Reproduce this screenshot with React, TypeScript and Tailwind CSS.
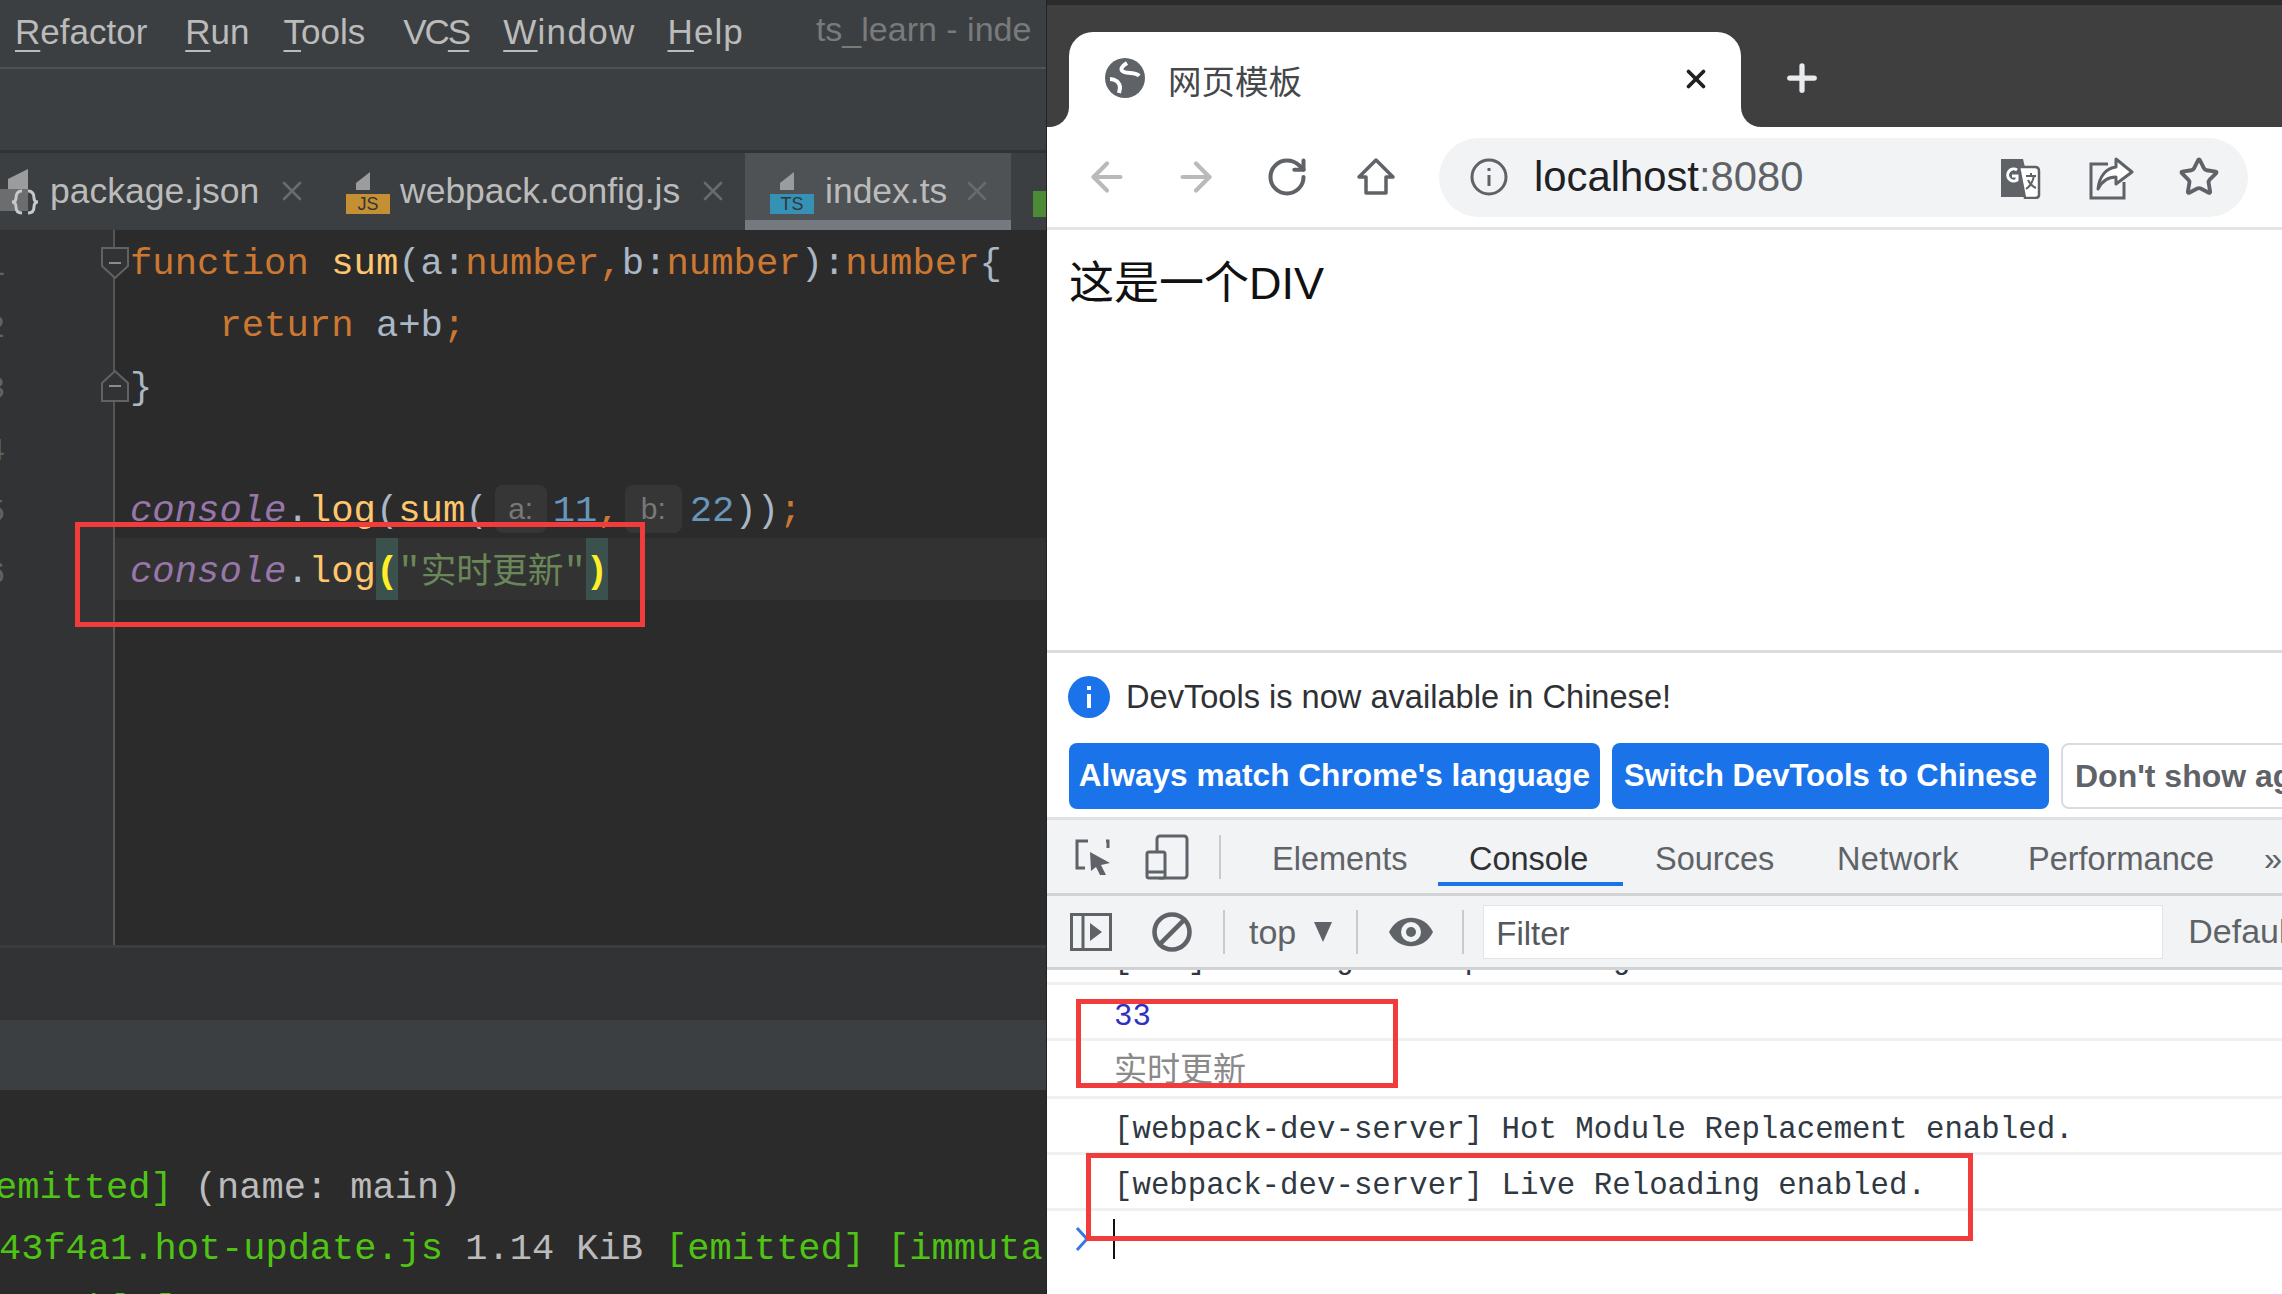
import React from "react";
import { X, Plus, ArrowLeft, ArrowRight, RotateCw, Star, Ban } from "lucide-react";

const mono = "font-['Liberation_Mono','Noto_Sans_CJK_SC',monospace]";

function Menu({ k, r, w }: { k: string; r: string; w: string }) {
  return (
    <span className={`${w} shrink-0`}>
      <span className="underline underline-offset-[6px] decoration-2">{k}</span>
      {r}
    </span>
  );
}

function FileIcon({ label, color, cls }: { label: string; color: string; cls: string }) {
  return (
    <span className={`relative shrink-0 w-[44px] h-[44px] ${cls}`}>
      <svg width="44" height="44" viewBox="0 0 44 44" className="absolute left-0 top-0">
        <path d="M10 20 L10 13 L24 2 L24 20 Z" fill="#9a9c9e" />
      </svg>
      <span
        className={`absolute left-0 bottom-0 w-[44px] h-[20px] ${color} text-[18px] leading-[20px] text-center text-[#33363a] font-['Liberation_Sans',sans-serif]`}
      >
        {label}
      </span>
    </span>
  );
}

function Tab({ icon, text, w, xLeft, active }: { icon: React.ReactNode; text: string; w: string; xLeft: string; active?: boolean }) {
  return (
    <div className={`relative flex items-center h-[77px] shrink-0 ${w} ${active ? "bg-[#4e5254]" : ""}`}>
      {icon}
      <span className="text-[#bbbbbb] text-[35.5px] leading-none">{text}</span>
      <X className="text-[#686a6c] shrink-0 mt-[-2px]" size={32} strokeWidth={2} style={{ marginLeft: xLeft }} />
      {active && <div className="absolute left-0 right-0 bottom-0 h-[10px] bg-[#747a80]" />}
    </div>
  );
}

function Fold({ up }: { up?: boolean }) {
  return (
    <svg width="30" height="36" viewBox="0 0 30 36" className="absolute right-[-17px] top-[12px] z-10 bg-transparent">
      {up ? (
        <path d="M2 33 V15 L15 3 L28 15 V33 Z" fill="#313335" stroke="#606366" strokeWidth="2" />
      ) : (
        <path d="M2 3 V21 L15 33 L28 21 V3 Z" fill="#313335" stroke="#606366" strokeWidth="2" />
      )}
      <path d="M9 18 H21" stroke="#8a8c8e" strokeWidth="2" />
    </svg>
  );
}

function GutterRow({ n, fold }: { n?: string; fold?: "down" | "up" }) {
  return (
    <div className="relative h-[61.6px] overflow-visible">
      {n && <span className={`absolute left-[-14px] top-[10px] text-[32px] text-[#606366] ${mono}`}>{n}</span>}
      {fold && <Fold up={fold === "up"} />}
    </div>
  );
}

function CodeLine({ children, active }: { children?: React.ReactNode; active?: boolean }) {
  return (
    <div className={`flex items-center h-[61.6px] pl-[15px] pt-[9px] whitespace-pre text-[37.25px] ${mono} ${active ? "bg-[#323232]" : ""}`}>
      {children}
    </div>
  );
}

function Hint({ t, cls }: { t: string; cls: string }) {
  return (
    <span className={`flex items-center justify-center h-[48px] mt-[-6px] rounded-[8px] bg-[#363636] text-[#787878] text-[30px] font-['Liberation_Sans',sans-serif] ${cls}`}>
      {t}
    </span>
  );
}

function ConsoleRow({ children, cls }: { children: React.ReactNode; cls: string }) {
  return <div className={`border-b-[3px] border-[#f0f0f0] pl-[67px] flex items-center whitespace-pre text-[30.75px] ${cls}`}>{children}</div>;
}

function RedBox({ cls }: { cls: string }) {
  return <div className={`absolute border-[5px] border-[#f23c3c] ${cls}`} />;
}

export default function App() {
  const cP = "text-[#9876aa] italic";
  const cO = "text-[#cc7832]";
  const cY = "text-[#ffc66d]";
  const cW = "text-[#a9b7c6]";
  const cB = "text-[#6897bb]";
  const cS = "text-[#6a8759]";
  const brace = "bg-[#3b514d] text-[#ffef28] font-bold self-stretch -mt-[9px] pt-[9px] flex items-center";
  return (
    <div className="relative flex w-[2282px] h-[1294px] overflow-hidden bg-[#2b2b2b] font-['Liberation_Sans','Noto_Sans_CJK_SC',sans-serif]">
      {/* IDE */}
      <div className="flex flex-col w-[1046px] shrink-0 overflow-hidden">
        <div className="flex items-center h-[69px] pl-[15px] pb-[2px] bg-[#3c3f41] border-b-2 border-[#505355] text-[#bbbbbb] text-[35px] overflow-hidden whitespace-nowrap">
          <Menu k="R" r="efactor" w="" />
          <Menu k="R" r="un" w="ml-[38px]" />
          <Menu k="T" r="ools" w="ml-[34px]" />
          <span className="shrink-0 ml-[38px] tracking-[-2px]">VC<span className="underline underline-offset-[6px] decoration-2">S</span></span>
          <span className="shrink-0 ml-[34px] tracking-[1.3px]"><span className="underline underline-offset-[6px] decoration-2">W</span>indow</span>
          <span className="shrink-0 ml-[32px] tracking-[1.1px]"><span className="underline underline-offset-[6px] decoration-2">H</span>elp</span>
          <span className="ml-[72px] text-[#787a7c] mb-[6px] text-[34px]">ts_learn - inde</span>
        </div>
        <div className="h-[84px] bg-[#3c3f41] border-b-[3px] border-[#323232]" />
        <div className="flex h-[77px] bg-[#3c3f41] overflow-hidden whitespace-nowrap">
          <Tab w="w-[330px]" xLeft="17px" icon={
            <span className="relative shrink-0 w-[50px] h-[50px]">
              <svg width="50" height="50" viewBox="0 0 50 50">
                <path d="M8 22 L8 12 L28 2 L28 22 Z" fill="#9a9c9e" />
                <path d="M0 22 H28 V44 H0 Z" fill="#9a9c9e" opacity="0.5" />
                <path d="M22 24 Q16 24 16 31 Q16 35 12 35 Q16 35 16 40 Q16 46 22 46 M28 24 Q34 24 34 31 Q34 35 38 35 Q34 35 34 40 Q34 46 28 46" stroke="#c8c8c8" strokeWidth="3" fill="none" />
              </svg>
            </span>
          } text="package.json" />
          <Tab w="w-[415px]" xLeft="17px" icon={<FileIcon label="JS" color="bg-[#c59033]" cls="ml-[16px] mr-[10px]" />} text="webpack.config.js" />
          <Tab active w="w-[266px]" xLeft="14px" icon={<FileIcon label="TS" color="bg-[#3592b5]" cls="ml-[25px] mr-[11px]" />} text="index.ts" />
          <div className="ml-[22px] mt-[20px] w-[20px] h-[44px] flex flex-col justify-end">
            <div className="h-[26px] bg-[#4c8a35]" />
          </div>
        </div>

        <div className="flex h-[715px] bg-[#2b2b2b]">
          <div className="relative w-[115px] shrink-0 bg-[#313335] border-r-2 border-[#555555] pt-[3px]">
            <GutterRow n="1" fold="down" />
            <GutterRow n="2" />
            <GutterRow n="3" fold="up" />
            <GutterRow n="4" />
            <GutterRow n="5" />
            <GutterRow n="6" />
          </div>
          <div className="flex-1 min-w-0">
            <CodeLine>
              <span className={cO}>function </span>
              <span className={cY}>sum</span>
              <span className={cW}>(a:</span>
              <span className={cO}>number,</span>
              <span className={cW}>b:</span>
              <span className={cO}>number</span>
              <span className={cW}>):</span>
              <span className={cO}>number</span>
              <span className={cW}>{"{"}</span>
            </CodeLine>
            <CodeLine>
              <span className={cO}>    return </span>
              <span className={cW}>a+b</span>
              <span className={cO}>;</span>
            </CodeLine>
            <CodeLine><span className={cW}>{"}"}</span></CodeLine>
            <CodeLine />
            <CodeLine>
              <span className={cP}>console</span>
              <span className={cW}>.</span>
              <span className={cY}>log</span>
              <span className={cW}>(</span>
              <span className={cY}>sum</span>
              <span className={cW}>(</span>
              <Hint t="a:" cls="w-[52px] ml-[7px] mr-[6px]" />
              <span className={cB}>11</span>
              <span className={cO}>,</span>
              <Hint t="b:" cls="w-[57px] ml-[5px] mr-[8px]" />
              <span className={cB}>22</span>
              <span className={cW}>))</span>
              <span className={cO}>;</span>
            </CodeLine>
            <CodeLine active>
              <span className={cP}>console</span>
              <span className={cW}>.</span>
              <span className={cY}>log</span>
              <span className={brace}>(</span>
              <span className={cS}>"</span>
              <span className={`${cS} text-[35.7px]`}>实时更新</span>
              <span className={cS}>"</span>
              <span className={brace}>)</span>
            </CodeLine>
          </div>
        </div>

        <div className="h-[72px] bg-[#313335] border-t-[3px] border-[#3a3c3e]" />
        <div className="h-[73px] bg-[#3c3f41] border-t-[3px] border-[#323232]" />
        <div className={`flex-1 bg-[#2b2b2b] pt-[68px] text-[37px] leading-[61px] whitespace-pre ${mono} overflow-hidden`}>
          <div className="-ml-[5px] text-[#4fc414]">
            emitted]<span className="text-[#bbbbbb]"> (name: main)</span>
          </div>
          <div className="-ml-[1px] text-[#4fc414]">
            43f4a1.hot-update.js<span className="text-[#bbbbbb]"> 1.14 KiB </span>[emitted] [immuta
          </div>
          <div className="text-[#4fc414]">    ble]</div>
        </div>
      </div>

      {/* Browser */}
      <div className="flex flex-col flex-1 min-w-0 border-l border-[#222]">
        <div className="relative h-[127px] bg-[#3f3f3f] border-t-[5px] border-[#2c2c2c] flex items-end pl-[22px]">
          <div className="relative flex items-center w-[672px] h-[95px] bg-white rounded-t-[24px] pl-[36px] pb-[8px]">
            <svg width="40" height="42" viewBox="0 0 40 42" className="shrink-0 mt-[4px]">
              <circle cx="20" cy="21" r="20" fill="#5f6368" />
              <path d="M22 6 C17 9 14 13 19 15 C24 17 31 15 34 19 M5 22 C10 22 15 25 15 31 L14 36" stroke="#fff" strokeWidth="4" fill="none" />
            </svg>
            <span className="ml-[23px] mt-[15px] text-[33.5px] text-[#45474a]">网页模板</span>
            <X className="absolute left-[612px] top-[32px] text-[#202124]" size={30} strokeWidth={3} />
            <div className="absolute left-[-20px] bottom-0 w-[20px] h-[20px] bg-white">
              <div className="w-full h-full bg-[#3f3f3f] rounded-br-[20px]" />
            </div>
            <div className="absolute right-[-20px] bottom-0 w-[20px] h-[20px] bg-white">
              <div className="w-full h-full bg-[#3f3f3f] rounded-bl-[20px]" />
            </div>
          </div>
          <Plus className="ml-[40px] mb-[28px] text-[#e8eaed]" size={42} strokeWidth={3} />
        </div>

        <div className="flex items-center h-[103px] bg-white border-b-[3px] border-[#e3e4e6] pl-[37px]">
          <ArrowLeft className="text-[#b8babc] shrink-0" size={46} strokeWidth={2.2} />
          <ArrowRight className="text-[#b8babc] ml-[43px] shrink-0" size={46} strokeWidth={2.2} />
          <RotateCw className="text-[#5f6368] ml-[46px] shrink-0" size={44} strokeWidth={2.2} />
          <svg width="40" height="40" viewBox="0 0 40 40" className="ml-[47px] shrink-0">
            <path d="M20 3 L37 20 H30 V36 H10 V20 H3 Z" fill="none" stroke="#5f6368" strokeWidth="3.5" strokeLinejoin="round" />
          </svg>
          <div className="flex items-center relative ml-[43px] w-[809px] h-[79px] rounded-full bg-[#f1f3f4] pl-[31px] shrink-0">
            <svg width="38" height="38" viewBox="0 0 38 38" className="shrink-0">
              <circle cx="19" cy="19" r="17" fill="none" stroke="#5f6368" strokeWidth="3" />
              <path d="M19 17 V28 M19 10 V13" stroke="#5f6368" strokeWidth="3" />
            </svg>
            <span className="ml-[26px] text-[41.8px] leading-none text-[#202124]">
              localhost<span className="text-[#5f6368]">:8080</span>
            </span>
            <svg width="42" height="42" viewBox="0 0 42 42" className="absolute left-[560px] top-[19px]">
              <path d="M2 2 H24 L33 40 H2 Z" fill="#5f6368" />
              <path d="M20 10 H36 Q40 10 40 14 V38 Q40 41 36 41 H26 Z" fill="#fff" stroke="#5f6368" strokeWidth="2.5" />
              <path d="M18 13 A6 6 0 1 0 18 23 V19 H13" stroke="#fff" strokeWidth="3" fill="none" />
              <path d="M27 19 H37 M32 16 V19 M35 19 Q33 28 27 32 M29 23 Q32 29 37 31" stroke="#5f6368" strokeWidth="2" fill="none" />
            </svg>
            <svg width="46" height="44" viewBox="0 0 46 44" className="absolute left-[649px] top-[18px]">
              <path d="M20 8 H3 V42 H36 V26" fill="none" stroke="#5f6368" strokeWidth="3" />
              <path d="M28 3 L44 16 L28 28 V21 C20 21 14 25 10 33 C11 21 18 12 28 11 Z" fill="#fff" stroke="#5f6368" strokeWidth="3" strokeLinejoin="round" />
            </svg>
            <Star className="absolute left-[739px] top-[18px] text-[#5f6368]" size={42} strokeWidth={2.2} />
          </div>
        </div>

        <div className="h-[423px] bg-white border-b-[3px] border-[#dcdcdc] pl-[22px] pt-[29px] text-[45px] leading-[50px] text-[#111]">
          这是一个DIV
        </div>

        <div className="flex items-center h-[75px] bg-white pl-[21px] pt-[13px]">
          <svg width="42" height="42" viewBox="0 0 42 42" className="shrink-0">
            <circle cx="21" cy="21" r="21" fill="#1a73e8" />
            <path d="M21 18 V32 M21 10 V14" stroke="#fff" strokeWidth="4" />
          </svg>
          <span className="ml-[16px] text-[32.6px] text-[#303134] whitespace-nowrap">DevTools is now available in Chinese!</span>
        </div>
        <div className="flex h-[92px] bg-white pl-[22px] pt-[15px] gap-[12px] border-b-[3px] border-[#dfe1e3] overflow-hidden whitespace-nowrap">
          <div className="flex items-center justify-center w-[531px] h-[66px] rounded-[8px] bg-[#1a73e8] text-white font-bold text-[31.6px] shrink-0">
            Always match Chrome's language
          </div>
          <div className="flex items-center justify-center w-[437px] h-[66px] rounded-[8px] bg-[#1a73e8] text-white font-bold text-[31px] shrink-0">
            Switch DevTools to Chinese
          </div>
          <div className="flex items-center w-[300px] h-[66px] rounded-[8px] border-2 border-[#dadce0] bg-white text-[#5f6368] font-bold text-[32px] pl-[12px] shrink-0">
            Don't show again
          </div>
        </div>

        <div className="flex items-center h-[76px] bg-[#f1f3f4] border-b-[3px] border-[#d0d2d4] pl-[27px] text-[#5f6368] text-[32.5px] whitespace-nowrap overflow-hidden">
          <svg width="38" height="38" viewBox="0 0 38 38" className="shrink-0">
            <path d="M14 3 H3 V30 H11" fill="none" stroke="#5f6368" strokeWidth="3" />
            <path d="M32 3 H34 V10" fill="none" stroke="#5f6368" strokeWidth="3" />
            <path d="M16 14 L36 25 L27 27 L32 37 L26 37 L22 29 L17 33 Z" fill="#5f6368" />
          </svg>
          <svg width="44" height="46" viewBox="0 0 44 46" className="ml-[33px] shrink-0">
            <rect x="12" y="2" width="30" height="42" rx="3" fill="none" stroke="#5f6368" strokeWidth="3" />
            <rect x="2" y="18" width="18" height="26" rx="2" fill="#f1f3f4" stroke="#5f6368" strokeWidth="3" />
            <path d="M2 38 H20" stroke="#5f6368" strokeWidth="3" />
          </svg>
          <div className="w-[2px] h-[44px] bg-[#c8cacc] ml-[30px] shrink-0" />
          <span className="ml-[51px] w-[132px] pt-[5px]">Elements</span>
          <span className="relative ml-[65px] w-[119px] pt-[5px] text-[#303134]">
            Console
            <span className="absolute left-[-31px] right-[-35px] top-[52px] h-[4px] bg-[#1a73e8]" />
          </span>
          <span className="ml-[67px] w-[115px] pt-[5px]">Sources</span>
          <span className="ml-[67px] w-[127px] pt-[5px] tracking-[0.4px]">Network</span>
          <span className="ml-[69px] w-[184px] pt-[5px]">Performance</span>
          <span className="ml-[52px] pt-[5px]">»</span>
        </div>

        <div className="flex items-center h-[74px] bg-[#f1f3f4] border-b-[3px] border-[#d0d2d4] pl-[23px] text-[#5f6368] text-[34px] whitespace-nowrap overflow-hidden">
          <svg width="42" height="38" viewBox="0 0 42 38" className="shrink-0">
            <rect x="1.5" y="1.5" width="39" height="35" fill="none" stroke="#5f6368" strokeWidth="3" />
            <path d="M13 2 V36" stroke="#5f6368" strokeWidth="3" />
            <path d="M20 10 L32 19 L20 28 Z" fill="#5f6368" />
          </svg>
          <Ban className="ml-[39px] shrink-0 -scale-x-100" size={42} strokeWidth={2.6} />
          <div className="w-[2px] h-[44px] bg-[#c8cacc] ml-[30px] shrink-0" />
          <span className="ml-[24px] w-[54px] pt-[1px]">top</span>
          <svg width="18" height="20" viewBox="0 0 18 20" className="ml-[18px] shrink-0">
            <path d="M0 0 H18 L9 20 Z" fill="#5f6368" />
          </svg>
          <div className="w-[2px] h-[44px] bg-[#c8cacc] ml-[24px] shrink-0" />
          <svg width="46" height="34" viewBox="0 0 46 34" className="ml-[30px] shrink-0">
            <path d="M1 17 C10 -2 36 -2 45 17 C36 36 10 36 1 17 Z" fill="#5f6368" />
            <circle cx="23" cy="17" r="10" fill="#f1f3f4" />
            <circle cx="23" cy="17" r="5" fill="#5f6368" />
          </svg>
          <div className="w-[2px] h-[44px] bg-[#c8cacc] ml-[28px] shrink-0" />
          <div className="flex items-center ml-[19px] w-[680px] h-[54px] bg-white border border-[#e2e3e5] pl-[12px] pt-[4px] text-[33px] text-[#55585c] shrink-0">
            Filter
          </div>
          <span className="ml-[25px]">Default levels</span>
        </div>

        <div className={`flex-1 bg-white ${mono} overflow-hidden`}>
          <div className="h-[15px] overflow-hidden border-b-[3px] border-[#f0f0f0] pl-[67px] text-[30.75px] leading-[30px] whitespace-pre text-[#303942]">
            <div className="-mt-[25px]">[HMR] Waiting for update signal from WDS...</div>
          </div>
          <ConsoleRow cls="h-[56px] text-[#3030c0] pt-[12px]">33</ConsoleRow>
          <ConsoleRow cls="h-[58px] text-[#8a8a8a] pt-[8px]"><span className="text-[33px]">实时更新</span></ConsoleRow>
          <ConsoleRow cls="h-[56px] text-[#303942] pt-[10px]">[webpack-dev-server] Hot Module Replacement enabled.</ConsoleRow>
          <ConsoleRow cls="h-[56px] text-[#303942] pt-[10px]">[webpack-dev-server] Live Reloading enabled.</ConsoleRow>
          <div className="flex items-center h-[56px] pl-[28px]">
            <svg width="14" height="24" viewBox="0 0 14 24" className="shrink-0">
              <path d="M2 1 L12 12 L2 23" fill="none" stroke="#3478e8" strokeWidth="3" />
            </svg>
            <div className="w-[2px] h-[40px] bg-[#111] ml-[24px]" />
          </div>
        </div>
      </div>

      <RedBox cls="left-[75px] top-[522px] w-[570px] h-[105px]" />
      <RedBox cls="left-[1076px] top-[999px] w-[322px] h-[89px]" />
      <RedBox cls="left-[1086px] top-[1153px] w-[887px] h-[88px]" />
    </div>
  );
}
